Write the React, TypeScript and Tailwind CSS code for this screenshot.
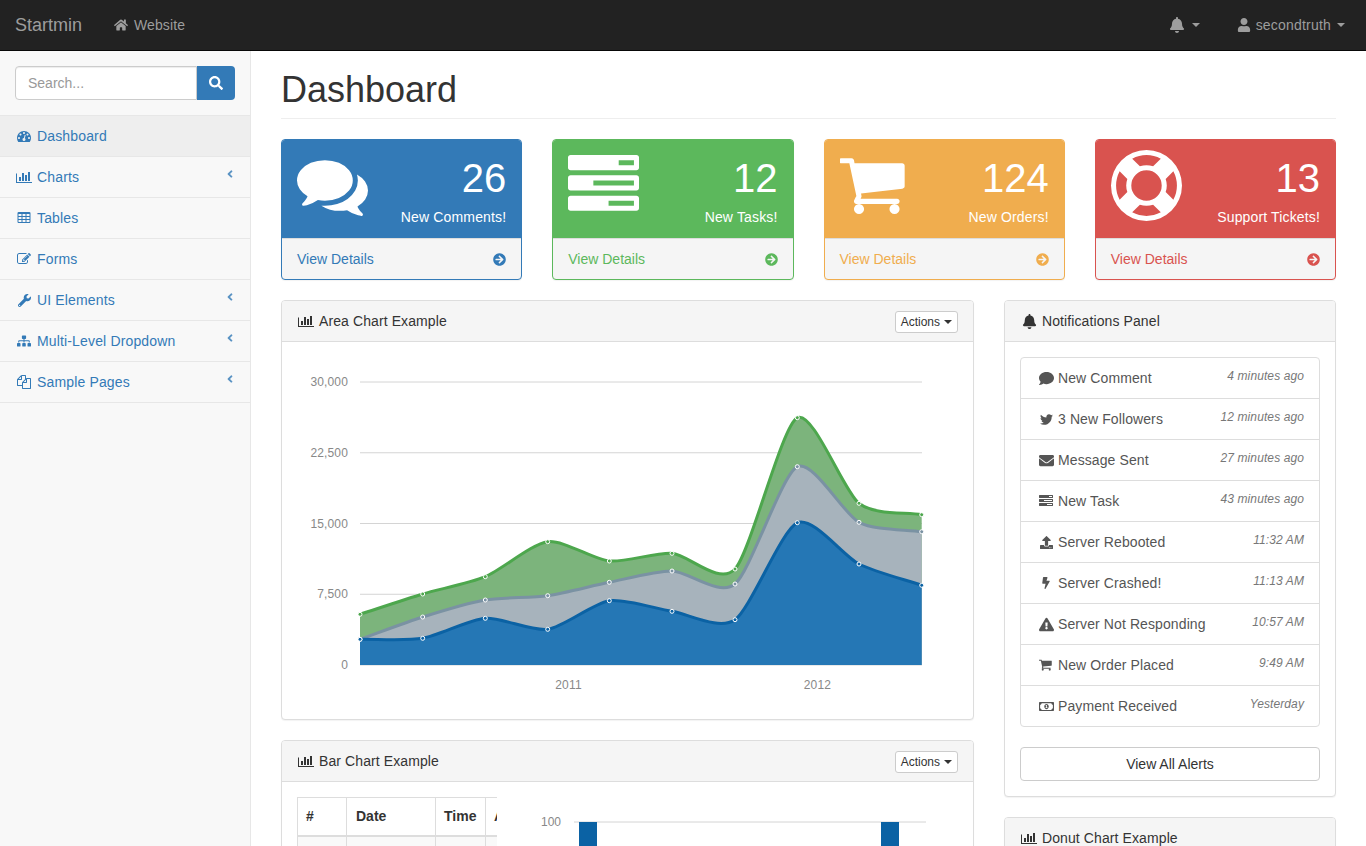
import React from 'react';
import {
  FaBell, FaBolt, FaComment, FaEnvelope, FaExclamationTriangle, FaHome, FaRegMoneyBillAlt,
  FaSearch, FaSitemap, FaTwitter, FaUpload, FaUser, FaWrench, FaArrowCircleRight, FaAngleLeft,
} from 'react-icons/fa';

// Font Awesome 4 glyphs the icon package no longer ships in this form
const glyphs: Record<string, { w: number; x?: number; y?: number; d: string }> = {
  dashboard: { w: 1792, d: 'M384 1152q0-53-37.5-90.5t-90.5-37.5-90.5 37.5-37.5 90.5 37.5 90.5 90.5 37.5 90.5-37.5 37.5-90.5zm192-448q0-53-37.5-90.5t-90.5-37.5-90.5 37.5-37.5 90.5 37.5 90.5 90.5 37.5 90.5-37.5 37.5-90.5zm428 481l101-382q6-26-7.5-48.5t-38.5-29.5-48 6.5-30 39.5l-101 382q-60 5-107 43.5t-63 98.5q-20 77 20 146t117 89 146-20 89-117q16-60-6-117t-72-91zm660-33q0-53-37.5-90.5t-90.5-37.5-90.5 37.5-37.5 90.5 37.5 90.5 90.5 37.5 90.5-37.5 37.5-90.5zm-640-640q0-53-37.5-90.5t-90.5-37.5-90.5 37.5-37.5 90.5 37.5 90.5 90.5 37.5 90.5-37.5 37.5-90.5zm448 192q0-53-37.5-90.5t-90.5-37.5-90.5 37.5-37.5 90.5 37.5 90.5 90.5 37.5 90.5-37.5 37.5-90.5zm320 448q0 261-141 483-19 29-54 29h-1402q-35 0-54-29-141-221-141-483 0-182 71-348t191-286 286-191 348-71 348 71 286 191 191 286 71 348z' },
  bars: { w: 2048, d: 'M640 896v512h-256v-512h256zm384-512v1024h-256v-1024h256zm1024 1152v128h-2048v-1216h128v1088h1920zm-640-896v768h-256v-768h256zm384-384v1152h-256v-1152h256z' },
  table: { w: 1792, d: 'M576 1376v-192q0-14-9-23t-23-9h-320q-14 0-23 9t-9 23v192q0 14 9 23t23 9h320q14 0 23-9t9-23zm0-384v-192q0-14-9-23t-23-9h-320q-14 0-23 9t-9 23v192q0 14 9 23t23 9h320q14 0 23-9t9-23zm512 384v-192q0-14-9-23t-23-9h-320q-14 0-23 9t-9 23v192q0 14 9 23t23 9h320q14 0 23-9t9-23zm-512-768v-192q0-14-9-23t-23-9h-320q-14 0-23 9t-9 23v192q0 14 9 23t23 9h320q14 0 23-9t9-23zm512 384v-192q0-14-9-23t-23-9h-320q-14 0-23 9t-9 23v192q0 14 9 23t23 9h320q14 0 23-9t9-23zm512 384v-192q0-14-9-23t-23-9h-320q-14 0-23 9t-9 23v192q0 14 9 23t23 9h320q14 0 23-9t9-23zm-512-768v-192q0-14-9-23t-23-9h-320q-14 0-23 9t-9 23v192q0 14 9 23t23 9h320q14 0 23-9t9-23zm512 384v-192q0-14-9-23t-23-9h-320q-14 0-23 9t-9 23v192q0 14 9 23t23 9h320q14 0 23-9t9-23zm0-384v-192q0-14-9-23t-23-9h-320q-14 0-23 9t-9 23v192q0 14 9 23t23 9h320q14 0 23-9t9-23zm128-320v1088q0 66-47 113t-113 47h-1344q-66 0-113-47t-47-113v-1088q0-66 47-113t113-47h1344q66 0 113 47t47 113z' },
  edit: { w: 1792, d: 'M888 1184l116-116-152-152-116 116v56h96v96h56zm440-720q-16-16-33 1l-350 350q-17 17-1 33t33-1l350-350q17-17 1-33zm80 594v190q0 119-84.5 203.5t-203.5 84.5h-832q-119 0-203.5-84.5t-84.5-203.5v-832q0-119 84.5-203.5t203.5-84.5h832q63 0 117 25 15 7 18 23 3 17-9 29l-49 49q-14 14-32 8-23-6-45-6h-832q-66 0-113 47t-47 113v832q0 66 47 113t113 47h832q66 0 113-47t47-113v-126q0-13 9-22l64-64q15-15 35-7t20 29zm-96-738l288 288-672 672h-288v-288zm444 132l-92 92-288-288 92-92q28-28 68-28t68 28l152 152q28 28 28 68t-28 68z' },
  files: { w: 1792, d: 'M1696 384q40 0 68 28t28 68v1216q0 40-28 68t-68 28h-960q-40 0-68-28t-28-68v-288h-544q-40 0-68-28t-28-68v-672q0-40 20-88t48-76l408-408q28-28 76-48t88-20h416q40 0 68 28t28 68v328q68-40 128-40h416zm-544 213l-299 299h299v-299zm-640-384l-299 299h299v-299zm196 647l316-316v-416h-384v416q0 40-28 68t-68 28h-416v640h512v-256q0-40 20-88t48-76zm956 804v-1152h-384v416q0 40-28 68t-68 28h-416v640h896z' },
  comments: { w: 1792, d: 'M1408 768q0 139-94 257t-256.5 186.5-353.5 68.5q-86 0-176-16-124 88-278 128-36 9-86 16h-3q-11 0-20.5-8t-11.5-21q-1-3-1-6.5t.5-6.5 2-6l2.5-5 3.5-5.5 4-5 4.5-5 4-4.5q5-6 23-25t26-29.5 22.5-29 25-38.5 20.5-44q-124-72-195-177t-71-224q0-139 94-257t256.5-186.5 353.5-68.5 353.5 68.5 256.5 186.5 94 257zm384 256q0 120-71 224.5t-195 176.5q10 24 20.5 44t25 38.5 22.5 29 26 29.5 23 25q1 1 4 4.5t4.5 5 4 5 3.5 5.5l2.5 5 2 6 .5 6.5-1 6.5q-3 14-13 22t-22 7q-50-7-86-16-154-40-278-128-90 16-176 16-271 0-472-132 58 4 88 4 161 0 309-45t264-129q125-92 192-212t67-254q0-77-23-152 129 71 204 178t75 230z' },
  tasks: { w: 1792, d: 'M1024 1408h640v-128h-640v128zm-384-512h1024v-128h-1024v128zm640-512h384v-128h-384v128zm512 832v256q0 26-19 45t-45 19h-1664q-26 0-45-19t-19-45v-256q0-26 19-45t45-19h1664q26 0 45 19t19 45zm0-512v256q0 26-19 45t-45 19h-1664q-26 0-45-19t-19-45v-256q0-26 19-45t45-19h1664q26 0 45 19t19 45zm0-512v256q0 26-19 45t-45 19h-1664q-26 0-45-19t-19-45v-256q0-26 19-45t45-19h1664q26 0 45 19t19 45z' },
  cart: { w: 1792, x: 96, y: 48, d: 'M704 1536q0 52-38 90t-90 38-90-38-38-90 38-90 90-38 90 38 38 90zm896 0q0 52-38 90t-90 38-90-38-38-90 38-90 90-38 90 38 38 90zm128-1088v512q0 24-16.5 42.5t-40.5 21.5l-1044 122q13 60 13 70 0 16-24 64h920q26 0 45 19t19 45-19 45-45 19h-1024q-26 0-45-19t-19-45q0-11 8-31.5t16-36 21.5-40 15.5-29.5l-177-823h-204q-26 0-45-19t-19-45 19-45 45-19h256q16 0 28.5 6.5t19.5 15.5 13 24.5 8 26 5.5 29.5 4.5 26h1201q26 0 45 19t19 45z' },
  lifering: { w: 1792, d: 'M896 0q182 0 348 71t286 191 191 286 71 348-71 348-191 286-286 191-348 71-348-71-286-191-191-286-71-348 71-348 191-286 286-191 348-71zm0 128q-190 0-361 90l194 194q82-28 167-28t167 28l194-194q-171-90-361-90zm-678 1129l194-194q-28-82-28-167t28-167l-194-194q-90 171-90 361t90 361zm678 407q190 0 361-90l-194-194q-82 28-167 28t-167-28l-194 194q171 90 361 90zm0-384q159 0 271.5-112.5t112.5-271.5-112.5-271.5-271.5-112.5-271.5 112.5-112.5 271.5 112.5 271.5 271.5 112.5zm484-217l194 194q90-171 90-361t-90-361l-194 194q28 82 28 167t-28 167z' },
};

function Glyph({ name, size = 14 }: { name: string; size?: number }) {
  const g = glyphs[name];
  return (
    <svg width={(g.w / 1792) * size} height={size} viewBox={`${g.x ?? 0} ${g.y ?? 0} ${g.w} 1792`} fill="currentColor" className="shrink-0">
      <path d={g.d} />
    </svg>
  );
}

function Caret() {
  return <span className="inline-block w-0 h-0 border-x-4 border-t-4 border-x-transparent border-t-current" />;
}

const xs = [360, 422.7, 485.3, 547.7, 609.3, 672, 735, 797.3, 859, 921.7];
const blue = [639.3, 638.3, 618.3, 629.3, 600.7, 611.3, 619.7, 522.7, 564, 585.3];
const grey = [639.3, 617, 600, 595.7, 582.3, 571, 584, 466.7, 522.3, 531.7];
const green = [614.3, 594, 576.7, 541.7, 561, 553.3, 569, 417.7, 503.3, 514.7];
const baseY = 665;

// same smoothing morris.js uses for its area lines
function smoothPath(ys: number[]) {
  const grads = ys.map((y, i) => {
    if (i === 0) return (ys[1] - y) / (xs[1] - xs[0]);
    if (i === ys.length - 1) return (y - ys[i - 1]) / (xs[i] - xs[i - 1]);
    return (ys[i + 1] - ys[i - 1]) / (xs[i + 1] - xs[i - 1]);
  });
  let d = `M${xs[0]},${ys[0]}`;
  for (let i = 1; i < ys.length; i++) {
    const ix = (xs[i] - xs[i - 1]) / 4;
    d += `C${xs[i - 1] + ix},${ys[i - 1] + ix * grads[i - 1]},${xs[i] - ix},${ys[i] - ix * grads[i]},${xs[i]},${ys[i]}`;
  }
  return d;
}

function AreaSeries({ ys, fill, stroke }: { ys: number[]; fill: string; stroke: string }) {
  const line = smoothPath(ys);
  return (
    <>
      <path d={`${line}L${xs[xs.length - 1]},${baseY}L${xs[0]},${baseY}Z`} fill={fill} />
      <path d={line} fill="none" stroke={stroke} strokeWidth={3} />
    </>
  );
}

function AreaPoints({ ys, fill }: { ys: number[]; fill: string }) {
  return (
    <>
      {ys.map((y, i) => (
        <circle key={i} cx={xs[i]} cy={y} r={2} fill={fill} stroke="#fff" strokeWidth={1} />
      ))}
    </>
  );
}

function AreaChart() {
  const grid: [string, number][] = [['30,000', 382], ['22,500', 452.75], ['15,000', 523.5], ['7,500', 594.25], ['0', 665]];
  return (
    <svg width={691} height={377} viewBox="282 342 691 377" className="block">
      {grid.map(([label, y]) => (
        <g key={label}>
          <line x1={360} x2={922} y1={y} y2={y} stroke="#d4d4d4" strokeWidth={1} />
          <text x={348} y={y + 4} textAnchor="end" fontSize={12} letterSpacing={0.15} fill="#888">{label}</text>
        </g>
      ))}
      <AreaSeries ys={green} fill="#7cb47c" stroke="#4da74d" />
      <AreaSeries ys={grey} fill="#a7b3bc" stroke="#7a92a3" />
      <AreaSeries ys={blue} fill="#2577b5" stroke="#0b62a4" />
      <AreaPoints ys={green} fill="#4da74d" />
      <AreaPoints ys={grey} fill="#7a92a3" />
      <AreaPoints ys={blue} fill="#0b62a4" />
      <text x={568.5} y={689} textAnchor="middle" fontSize={12} letterSpacing={0.2} fill="#888">2011</text>
      <text x={817.5} y={689} textAnchor="middle" fontSize={12} letterSpacing={0.2} fill="#888">2012</text>
    </svg>
  );
}

const navItems: { label: string; icon: React.ReactNode; arrow?: boolean; active?: boolean }[] = [
  { label: 'Dashboard', icon: <Glyph name="dashboard" />, active: true },
  { label: 'Charts', icon: <Glyph name="bars" />, arrow: true },
  { label: 'Tables', icon: <Glyph name="table" /> },
  { label: 'Forms', icon: <Glyph name="edit" /> },
  { label: 'UI Elements', icon: <FaWrench size={13} />, arrow: true },
  { label: 'Multi-Level Dropdown', icon: <FaSitemap size={14} />, arrow: true },
  { label: 'Sample Pages', icon: <Glyph name="files" />, arrow: true },
];

const cards = [
  { n: '26', label: 'New Comments!', icon: 'comments', bg: 'bg-[#337ab7]', border: 'border-[#337ab7]', text: 'text-[#337ab7]' },
  { n: '12', label: 'New Tasks!', icon: 'tasks', bg: 'bg-[#5cb85c]', border: 'border-[#5cb85c]', text: 'text-[#5cb85c]' },
  { n: '124', label: 'New Orders!', icon: 'cart', bg: 'bg-[#f0ad4e]', border: 'border-[#f0ad4e]', text: 'text-[#f0ad4e]' },
  { n: '13', label: 'Support Tickets!', icon: 'lifering', bg: 'bg-[#d9534f]', border: 'border-[#d9534f]', text: 'text-[#d9534f]' },
];

const alerts: { label: string; time: string; icon: React.ReactNode }[] = [
  { label: 'New Comment', time: '4 minutes ago', icon: <FaComment size={15} /> },
  { label: '3 New Followers', time: '12 minutes ago', icon: <FaTwitter size={13} /> },
  { label: 'Message Sent', time: '27 minutes ago', icon: <FaEnvelope size={15} /> },
  { label: 'New Task', time: '43 minutes ago', icon: <Glyph name="tasks" /> },
  { label: 'Server Rebooted', time: '11:32 AM', icon: <FaUpload size={13} /> },
  { label: 'Server Crashed!', time: '11:13 AM', icon: <FaBolt size={12} /> },
  { label: 'Server Not Responding', time: '10:57 AM', icon: <FaExclamationTriangle size={15} /> },
  { label: 'New Order Placed', time: '9:49 AM', icon: <Glyph name="cart" /> },
  { label: 'Payment Received', time: 'Yesterday', icon: <FaRegMoneyBillAlt size={15} /> },
];

function PanelHeading({ title, icon, actions }: { title: string; icon: React.ReactNode; actions?: boolean }) {
  return (
    <div className="h-[41px] flex items-center justify-between pl-[15px] pr-[15px] bg-[#f5f5f5] border-b border-[#ddd] rounded-t-[3px]">
      <div className="flex items-center text-[#333] tracking-[0.1px]">
        <span className="w-[18px] mr-[4px] flex justify-center">{icon}</span>
        {title}
      </div>
      {actions && (
        <button className="h-[22px] mt-[1px] px-[5px] flex items-center gap-[4px] text-xs text-[#333] bg-white border border-[#ccc] rounded-[3px]">
          Actions <Caret />
        </button>
      )}
    </div>
  );
}

function Panel({ children }: { children: React.ReactNode }) {
  return <div className="bg-white border border-[#ddd] rounded shadow-[0_1px_1px_rgba(0,0,0,0.05)]">{children}</div>;
}

export default function App() {
  return (
    <div className="h-[846px] overflow-hidden bg-white text-sm leading-5 text-[#333] font-['Liberation_Sans',Arial,sans-serif]">
      <nav className="h-[51px] bg-[#222] border-b border-[#080808] flex items-center justify-between text-[#9d9d9d]">
        <div className="flex items-center">
          <span className="pl-[15px] text-lg w-[114px]">Startmin</span>
          <span className="flex items-center tracking-[0.1px]">
            <span className="w-[16px] mr-[4px] flex justify-start"><FaHome size={14} /></span>
            Website
          </span>
        </div>
        <div className="flex items-center pr-[21px]">
          <FaBell size={16} />
          <span className="ml-[7px] mr-[37px] flex"><Caret /></span>
          <FaUser size={14} />
          <span className="ml-[5px] mr-[6px] tracking-[0.2px]">secondtruth</span>
          <Caret />
        </div>
      </nav>

      <div className="flex h-[795px]">
        <aside className="w-[251px] shrink-0 bg-[#f8f8f8] border-r border-[#e7e7e7]">
          <div className="p-[15px] border-b border-[#e7e7e7]">
            <div className="flex h-[34px]">
              <div className="flex-1 flex items-center px-3 bg-white border border-[#ccc] rounded-l text-[#999] shadow-[inset_0_1px_1px_rgba(0,0,0,0.075)]">
                Search...
              </div>
              <div className="w-[38px] flex items-center justify-center bg-[#337ab7] text-white rounded-r">
                <FaSearch size={14} />
              </div>
            </div>
          </div>
          {navItems.map((item) => (
            <div
              key={item.label}
              className={`h-[41px] flex items-center justify-between pl-[15px] pr-[15px] border-b border-[#e7e7e7] text-[#337ab7] ${item.active ? 'bg-[#eee]' : ''}`}
            >
              <span className="flex items-center tracking-[0.15px]">
                <span className="w-[18px] mr-[4px] flex justify-center">{item.icon}</span>
                {item.label}
              </span>
              {item.arrow && <span className="-mt-[6px] mr-[-1px] opacity-80"><FaAngleLeft size={12} /></span>}
            </div>
          ))}
        </aside>

        <main className="flex-1 px-[30px] min-w-0">
          <h1 className="mt-[19px] pb-[8px] mb-[20px] border-b border-[#eee] text-4xl leading-[40px] font-medium text-[#333]">Dashboard</h1>

          <div className="grid grid-cols-4 gap-[30px] mb-[20px]">
            {cards.map((c) => (
              <div key={c.label} className={`border rounded ${c.border} bg-[#f5f5f5] shadow-[0_1px_1px_rgba(0,0,0,0.05)] overflow-hidden`}>
                <div className={`${c.bg} text-white px-[15px] pt-[10px] pb-[11px] flex justify-between`}>
                  <Glyph name={c.icon} size={71} />
                  <div className="text-right">
                    <div className="text-[40px] leading-[57px]">{c.n}</div>
                    <div className="leading-5 tracking-[0.15px]">{c.label}</div>
                  </div>
                </div>
                <div className={`h-[41px] px-[15px] flex items-center justify-between border-t border-[#ddd] ${c.text}`}>
                  <span>View Details</span>
                  <FaArrowCircleRight size={13} />
                </div>
              </div>
            ))}
          </div>

          <div className="grid grid-cols-[693px_332px] gap-x-[30px]">
            <div className="flex flex-col gap-[20px]">
              <Panel>
                <PanelHeading title="Area Chart Example" icon={<Glyph name="bars" />} actions />
                <AreaChart />
              </Panel>
              <Panel>
                <PanelHeading title="Bar Chart Example" icon={<Glyph name="bars" />} actions />
                <div className="flex p-[15px]">
                  <div className="w-[200px] shrink-0 overflow-hidden">
                    <table className="w-[260px] table-fixed border-collapse">
                      <thead>
                        <tr className="h-[38px] font-bold text-left">
                          <th className="w-[49px] px-[8px] border border-[#ddd] border-b-2">#</th>
                          <th className="w-[89px] pl-[9px] pr-[8px] border border-[#ddd] border-b-2">Date</th>
                          <th className="w-[50px] px-[8px] border border-[#ddd] border-b-2">Time</th>
                          <th className="px-[8px] border border-[#ddd] border-b-2">Amount</th>
                        </tr>
                      </thead>
                      <tbody>
                        <tr className="h-[37px] bg-[#f9f9f9]">
                          <td className="border border-[#ddd]" />
                          <td className="border border-[#ddd]" />
                          <td className="border border-[#ddd]" />
                          <td className="border border-[#ddd]" />
                        </tr>
                      </tbody>
                    </table>
                  </div>
                  <svg width={461} height={80} viewBox="497 797 461 80" className="block bg-white relative">
                    <line x1={574} x2={926} y1={822} y2={822} stroke="#d4d4d4" />
                    <text x={561} y={826} textAnchor="end" fontSize={12} fill="#888">100</text>
                    <rect x={579} y={822} width={18} height={60} fill="#0b62a4" />
                    <rect x={881} y={822} width={18} height={60} fill="#0b62a4" />
                  </svg>
                </div>
              </Panel>
            </div>

            <div className="flex flex-col gap-[20px]">
              <Panel>
                <PanelHeading title="Notifications Panel" icon={<FaBell size={15} />} />
                <div className="p-[15px]">
                  <div className="border border-[#ddd] rounded mb-[20px]">
                    {alerts.map((a, i) => (
                      <div key={a.label} className={`pl-[17px] pr-[15px] flex items-center justify-between text-[#555] ${i < alerts.length - 1 ? 'h-[41px] border-b border-[#ddd]' : 'h-[40px]'}`}>
                        <span className="flex items-center tracking-[0.1px]">
                          <span className="w-[16px] mr-[4px] flex justify-center">{a.icon}</span>
                          {a.label}
                        </span>
                        <em className="text-xs text-[#777] -mt-[5px] tracking-[0.1px]">{a.time}</em>
                      </div>
                    ))}
                  </div>
                  <div className="h-[34px] flex items-center justify-center border border-[#ccc] rounded text-[#333]">View All Alerts</div>
                </div>
              </Panel>
              <Panel>
                <PanelHeading title="Donut Chart Example" icon={<Glyph name="bars" />} />
                <div className="h-[200px]" />
              </Panel>
            </div>
          </div>
        </main>
      </div>
    </div>
  );
}
